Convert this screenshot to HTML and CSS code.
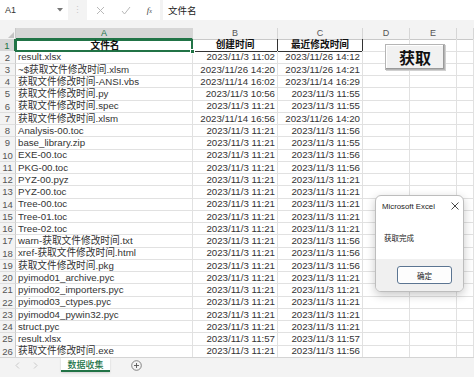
FILE: index.html
```html
<!DOCTYPE html>
<html lang="zh">
<head>
<meta charset="utf-8">
<link rel="stylesheet" href="styles.css">
</head>
<body>
<div class="app">
  <div class="fbar">
    <div class="namebox"><span>A1</span><svg class="caret" width="6" height="4" viewBox="0 0 6 4"><path d="M0 0h6L3 3.5z" fill="#777"/></svg></div>
    <div class="dots">⋮</div>
    <div class="fxbox">
      <svg width="9" height="9" viewBox="0 0 9 9"><path d="M1 1l7 7M8 1L1 8" stroke="#b8b8b8" stroke-width="1"/></svg>
      <svg width="10" height="9" viewBox="0 0 10 9"><path d="M1 5l2.5 3L9 1" stroke="#b8b8b8" stroke-width="1" fill="none"/></svg>
      <span class="fx">f<sub>x</sub></span>
    </div>
    <div class="formula">文件名</div>
  </div>
  <div class="gap"></div>
  <div class="sheet">
    <div class="row hdr">
      <div class="rh corner"><svg width="6" height="6" viewBox="0 0 6 6"><path d="M6 0v6H0z" fill="#c4c4c4"/></svg></div>
      <div class="ch active">A</div><div class="ch">B</div><div class="ch">C</div><div class="ch">D</div><div class="ch">E</div><div class="ch"></div>
    </div>
    <div class="row r1">
      <div class="rh active">1</div>
      <div class="c a b sel">文件名<span class="handle"></span></div><div class="c b bx">创建时间</div><div class="c b bx">最近修改时间</div><div class="c"></div><div class="c"></div><div class="c"></div>
    </div>
    <div class="row"><div class="rh">2</div><div class="c a">result.xlsx</div><div class="c d">2023/11/3 11:02</div><div class="c d">2023/11/26 14:12</div><div class="c"></div><div class="c"></div><div class="c"></div></div>
    <div class="row"><div class="rh">3</div><div class="c a">~$获取文件修改时间.xlsm</div><div class="c d">2023/11/26 14:20</div><div class="c d">2023/11/26 14:21</div><div class="c"></div><div class="c"></div><div class="c"></div></div>
    <div class="row"><div class="rh">4</div><div class="c a">获取文件修改时间-ANSI.vbs</div><div class="c d">2023/11/14 16:02</div><div class="c d">2023/11/14 16:29</div><div class="c"></div><div class="c"></div><div class="c"></div></div>
    <div class="row"><div class="rh">5</div><div class="c a">获取文件修改时间.py</div><div class="c d">2023/11/3 10:56</div><div class="c d">2023/11/3 11:55</div><div class="c"></div><div class="c"></div><div class="c"></div></div>
    <div class="row"><div class="rh">6</div><div class="c a">获取文件修改时间.spec</div><div class="c d">2023/11/3 11:21</div><div class="c d">2023/11/3 11:55</div><div class="c"></div><div class="c"></div><div class="c"></div></div>
    <div class="row"><div class="rh">7</div><div class="c a">获取文件修改时间.xlsm</div><div class="c d">2023/11/14 16:56</div><div class="c d">2023/11/26 14:20</div><div class="c"></div><div class="c"></div><div class="c"></div></div>
    <div class="row"><div class="rh">8</div><div class="c a">Analysis-00.toc</div><div class="c d">2023/11/3 11:21</div><div class="c d">2023/11/3 11:56</div><div class="c"></div><div class="c"></div><div class="c"></div></div>
    <div class="row"><div class="rh">9</div><div class="c a">base_library.zip</div><div class="c d">2023/11/3 11:21</div><div class="c d">2023/11/3 11:55</div><div class="c"></div><div class="c"></div><div class="c"></div></div>
    <div class="row"><div class="rh">10</div><div class="c a">EXE-00.toc</div><div class="c d">2023/11/3 11:21</div><div class="c d">2023/11/3 11:56</div><div class="c"></div><div class="c"></div><div class="c"></div></div>
    <div class="row"><div class="rh">11</div><div class="c a">PKG-00.toc</div><div class="c d">2023/11/3 11:21</div><div class="c d">2023/11/3 11:56</div><div class="c"></div><div class="c"></div><div class="c"></div></div>
    <div class="row"><div class="rh">12</div><div class="c a">PYZ-00.pyz</div><div class="c d">2023/11/3 11:21</div><div class="c d">2023/11/3 11:21</div><div class="c"></div><div class="c"></div><div class="c"></div></div>
    <div class="row"><div class="rh">13</div><div class="c a">PYZ-00.toc</div><div class="c d">2023/11/3 11:21</div><div class="c d">2023/11/3 11:21</div><div class="c"></div><div class="c"></div><div class="c"></div></div>
    <div class="row"><div class="rh">14</div><div class="c a">Tree-00.toc</div><div class="c d">2023/11/3 11:21</div><div class="c d">2023/11/3 11:21</div><div class="c"></div><div class="c"></div><div class="c"></div></div>
    <div class="row"><div class="rh">15</div><div class="c a">Tree-01.toc</div><div class="c d">2023/11/3 11:21</div><div class="c d">2023/11/3 11:21</div><div class="c"></div><div class="c"></div><div class="c"></div></div>
    <div class="row"><div class="rh">16</div><div class="c a">Tree-02.toc</div><div class="c d">2023/11/3 11:21</div><div class="c d">2023/11/3 11:21</div><div class="c"></div><div class="c"></div><div class="c"></div></div>
    <div class="row"><div class="rh">17</div><div class="c a">warn-获取文件修改时间.txt</div><div class="c d">2023/11/3 11:21</div><div class="c d">2023/11/3 11:56</div><div class="c"></div><div class="c"></div><div class="c"></div></div>
    <div class="row"><div class="rh">18</div><div class="c a">xref-获取文件修改时间.html</div><div class="c d">2023/11/3 11:21</div><div class="c d">2023/11/3 11:56</div><div class="c"></div><div class="c"></div><div class="c"></div></div>
    <div class="row"><div class="rh">19</div><div class="c a">获取文件修改时间.pkg</div><div class="c d">2023/11/3 11:21</div><div class="c d">2023/11/3 11:56</div><div class="c"></div><div class="c"></div><div class="c"></div></div>
    <div class="row"><div class="rh">20</div><div class="c a">pyimod01_archive.pyc</div><div class="c d">2023/11/3 11:21</div><div class="c d">2023/11/3 11:21</div><div class="c"></div><div class="c"></div><div class="c"></div></div>
    <div class="row"><div class="rh">21</div><div class="c a">pyimod02_importers.pyc</div><div class="c d">2023/11/3 11:21</div><div class="c d">2023/11/3 11:21</div><div class="c"></div><div class="c"></div><div class="c"></div></div>
    <div class="row"><div class="rh">22</div><div class="c a">pyimod03_ctypes.pyc</div><div class="c d">2023/11/3 11:21</div><div class="c d">2023/11/3 11:21</div><div class="c"></div><div class="c"></div><div class="c"></div></div>
    <div class="row"><div class="rh">23</div><div class="c a">pyimod04_pywin32.pyc</div><div class="c d">2023/11/3 11:21</div><div class="c d">2023/11/3 11:21</div><div class="c"></div><div class="c"></div><div class="c"></div></div>
    <div class="row"><div class="rh">24</div><div class="c a">struct.pyc</div><div class="c d">2023/11/3 11:21</div><div class="c d">2023/11/3 11:21</div><div class="c"></div><div class="c"></div><div class="c"></div></div>
    <div class="row"><div class="rh">25</div><div class="c a">result.xlsx</div><div class="c d">2023/11/3 11:57</div><div class="c d">2023/11/3 11:57</div><div class="c"></div><div class="c"></div><div class="c"></div></div>
    <div class="row"><div class="rh">26</div><div class="c a">获取文件修改时间.exe</div><div class="c d">2023/11/3 11:21</div><div class="c d">2023/11/3 11:56</div><div class="c"></div><div class="c"></div><div class="c"></div></div>

    <button class="getbtn">获取</button>

    <div class="dialog">
      <div class="dtitle"><span>Microsoft Excel</span><svg width="8" height="8" viewBox="0 0 8 8"><path d="M0.5 0.5l7 7M7.5 0.5l-7 7" stroke="#333" stroke-width="0.9"/></svg></div>
      <div class="dbody">获取完成</div>
      <div class="dfoot"><span class="okbtn">确定</span></div>
    </div>
  </div>
  <div class="tabbar">
    <svg class="nav" width="5" height="7" viewBox="0 0 5 7"><path d="M4 0.5L1 3.5 4 6.5" stroke="#c8c8c8" fill="none"/></svg>
    <svg class="nav" width="5" height="7" viewBox="0 0 5 7"><path d="M1 0.5L4 3.5 1 6.5" stroke="#c8c8c8" fill="none"/></svg>
    <div class="tab">数据收集</div>
    <svg class="plus" width="11" height="11" viewBox="0 0 11 11"><circle cx="5.5" cy="5.5" r="4.8" fill="none" stroke="#777" stroke-width="0.9"/><path d="M5.5 3v5M3 5.5h5" stroke="#555" stroke-width="0.9"/></svg>
  </div>
</div>
</body>
</html>
```
FILE: styles.css
```css
* { box-sizing: border-box; }
html, body { margin: 0; padding: 0; }
body {
  width: 474px;
  height: 377px;
  overflow: hidden;
  background: #f3f3f3;
  font-family: "Liberation Sans", "Noto Sans CJK SC", sans-serif;
  color: #222;
}
.app { display: flex; flex-direction: column; height: 377px; }

/* formula bar */
.fbar { display: flex; height: 20px; align-items: stretch; }
.namebox {
  width: 68px; background: #fff; display: flex; align-items: center;
  justify-content: space-between; padding: 0 5px 0 5px;
  font-size: 9px; color: #333;
}
.dots { width: 19px; color: #c9c9c9; font-size: 9px; display: flex; align-items: center; justify-content: center; }
.fxbox {
  width: 73px; background: #fff; display: flex; align-items: center;
  justify-content: space-between; padding: 0 8px 0 9px;
}
.fx { font-family: "Liberation Serif", serif; font-style: italic; font-size: 9px; color: #444; }
.fx sub { font-size: 6px; vertical-align: baseline; }
.formula {
  flex: 1; margin-left: 3px; background: #fff; display: flex; align-items: center;
  padding-left: 5px; font-size: 9.5px; font-family: "Noto Sans CJK SC", sans-serif; color: #222;
}
.gap { height: 8px; }

/* sheet */
.sheet { position: relative; flex: 1; background: #fff; overflow: hidden; }
.row {
  display: grid;
  grid-template-columns: 16px 177px 85px 85px 47px 47px 1fr;
  height: 12.25px;
}
.row.hdr { height: 11px; background: #f3f3f3; }
.rh {
  background: #f3f3f3; color: #555; font-size: 9.5px; line-height: 11px;
  text-align: center; border-right: 1px solid #c9c9c9; border-bottom: 1px solid #dedede;
  display: flex; align-items: center; justify-content: center;
}
.rh.corner { align-items: flex-end; justify-content: flex-end; padding: 0 1px 1px 0; border-bottom: 1px solid #c9c9c9; }
.rh.active { background: #d6d6d6; color: #217346; border-right: 2px solid #217346; }
.ch {
  font-size: 9px; color: #555; text-align: center; line-height: 10px;
  border-right: 1px solid #d6d6d6; border-bottom: 1px solid #c9c9c9;
}
.ch.active { background: #d6d6d6; color: #217346; border-bottom: 2px solid #217346; }
.c {
  border-right: 1px solid #e1e1e1; border-bottom: 1px solid #e1e1e1;
  font-size: 9.7px; line-height: 11.5px; white-space: nowrap; overflow: visible;
  color: #333;
}
.c.a { padding-left: 2px; }
.c.d { text-align: right; padding-right: 2px; }
.c.b { font-weight: bold; text-align: center; color: #111; }
.c.bx { border-right: 1px solid #333; border-bottom: 1px solid #333; }
.c.sel { position: relative; border: 2px solid #217346; border-bottom-width: 2px; margin-left: -1px; line-height: 9px; }
.handle {
  position: absolute; right: -4px; bottom: -4px; width: 5px; height: 5px;
  background: #217346; border: 1px solid #fff;
}

.getbtn {
  position: absolute; left: 385px; top: 16px; width: 60px; height: 26px;
  background: #f1f1f1; border: 1px solid #b5b5b5;
  box-shadow: inset -1px -1px 0 #9a9a9a, inset 1px 1px 0 #fff, 1px 1px 0 #d0d0d0;
  font-family: "Noto Sans CJK SC", sans-serif; font-weight: bold; font-size: 16px;
  color: #111; padding: 0; line-height: 22px;
}

.dialog {
  position: absolute; left: 375px; top: 167px; width: 89px; height: 97px;
  background: #fff; border: 1px solid #bdbdbd; border-radius: 6px;
  box-shadow: 0 3px 10px rgba(0,0,0,0.22);
  display: flex; flex-direction: column; overflow: hidden;
}
.dtitle {
  height: 20px; display: flex; align-items: center; justify-content: space-between;
  padding: 0 4px 0 6px; font-size: 7.8px; color: #222;
  font-family: "Liberation Sans", sans-serif;
}
.dbody {
  flex: 1; padding: 16px 0 0 8px; font-size: 7.5px; color: #222;
  font-family: "Noto Sans CJK SC", sans-serif;
}
.dfoot {
  height: 32px; background: #f0f0f0; display: flex; align-items: center; justify-content: flex-end;
  padding-right: 11px;
}
.okbtn {
  width: 55px; height: 18px; border-radius: 3px; background: #fdfdfd;
  border: 1.5px solid #5b7592; box-shadow: inset 0 0 0 1px #fff;
  display: flex; align-items: center; justify-content: center;
  font-size: 7.5px; color: #222; font-family: "Noto Sans CJK SC", sans-serif;
}

/* tab bar */
.tabbar {
  height: 20px; background: #f3f3f3; border-top: 1px solid #d4d4d4;
  display: flex; align-items: flex-start; padding-left: 15px;
}
.nav { margin-top: 4px; margin-right: 13px; }
.tab {
  margin-left: 10px; width: 49px; height: 14px; background: #fff;
  border-bottom: 2px solid #217346; box-shadow: 0 1px 2px rgba(0,0,0,0.15);
  font-family: "Noto Sans CJK SC", sans-serif; font-size: 9px; color: #217346;
  display: flex; align-items: center; justify-content: center; font-weight: 500;
}
.plus { margin-left: 21px; margin-top: 2px; }
```
